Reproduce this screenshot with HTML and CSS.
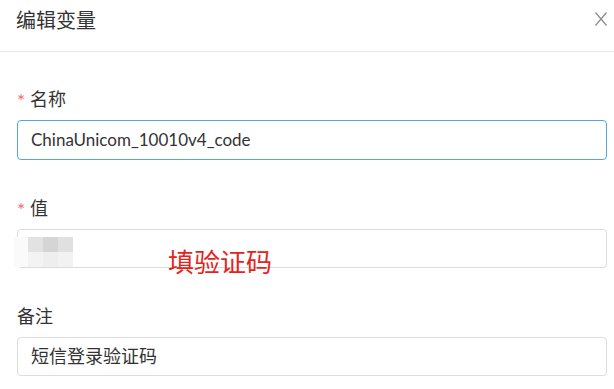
FILE: index.html
```html
<!DOCTYPE html>
<html lang="zh-CN">
<head>
<meta charset="utf-8">
<title>编辑变量</title>
<link rel="stylesheet" href="styles.css">
</head>
<body>
<div class="dialog">
  <div class="header">
    <div class="title">编辑变量</div>
    <svg class="close" width="12" height="14" viewBox="0 0 12 14"><path d="M0.5 0.5 L11.5 13.5 M11.5 0.5 L0.5 13.5" stroke="#8a8a8a" stroke-width="1.2" fill="none"/></svg>
  </div>
  <div class="form">
    <div class="item">
      <div class="label"><span class="req">*</span>名称</div>
      <div class="input focus">ChinaUnicom_10010v4_code</div>
    </div>
    <div class="item">
      <div class="label"><span class="req">*</span>值</div>
      <div class="input value">
        <div class="mosaic">
          <span class="m0"></span><span class="m1"></span><span class="m2"></span><span class="m3"></span>
          <span class="m4"></span><span class="m5"></span><span class="m6"></span><span class="m7"></span>
        </div>
        <div class="note">填验证码</div>
      </div>
    </div>
    <div class="item">
      <div class="label">备注</div>
      <div class="input">短信登录验证码</div>
    </div>
  </div>
</div>
</body>
</html>
```
FILE: styles.css
```css
html, body {
  margin: 0;
  padding: 0;
  background: #ffffff;
}
body {
  font-family: Lato, "Noto Sans CJK SC", "Microsoft YaHei", sans-serif;
  color: #333333;
}
.dialog {
  width: 614px;
}
.header {
  height: 52px;
  border-bottom: 1px solid #e8e8e8;
  display: flex;
  justify-content: space-between;
  align-items: flex-start;
  padding: 0 7px 0 16px;
  box-sizing: border-box;
}
.title {
  font-size: 20px;
  line-height: 40px;
  color: #333333;
}
.close {
  margin-top: 12px;
}
.form {
  padding: 35px 7px 0 17px;
}
.item {
  margin-bottom: 36px;
}
.label {
  font-size: 18px;
  line-height: 24px;
  height: 24px;
  margin-bottom: 9px;
  color: #333333;
  display: flex;
  align-items: flex-start;
}
.req {
  color: #f56c6c;
  font-size: 19px;
  line-height: 20px;
  margin-right: 5px;
  margin-top: 4px;
}
.input {
  height: 39px;
  box-sizing: border-box;
  border: 1px solid #dcdcdc;
  border-radius: 4px;
  padding: 0 13px;
  font-size: 18px;
  line-height: 37px;
  color: #333333;
}
.input.focus {
  border-color: #55a8de;
  height: 40px;
  line-height: 38px;
  font-size: 17px;
}
.input.value {
  position: relative;
}
.mosaic {
  position: absolute;
  left: -4px;
  top: 7px;
  display: grid;
  grid-template-columns: 14px 15px 15px 15px;
  grid-template-rows: 15px 15px;
}
.m0 { background: #fafafa; }
.m1 { background: #e2e2e2; }
.m2 { background: #d5d5d5; }
.m3 { background: #e0e0e0; }
.m4 { background: #fafafa; }
.m5 { background: #f3f3f3; }
.m6 { background: #eeeeee; }
.m7 { background: #f2f2f2; }
.note {
  position: absolute;
  left: 150px;
  top: 17px;
  font-size: 26px;
  line-height: 30px;
  color: #e5231b;
}
```
